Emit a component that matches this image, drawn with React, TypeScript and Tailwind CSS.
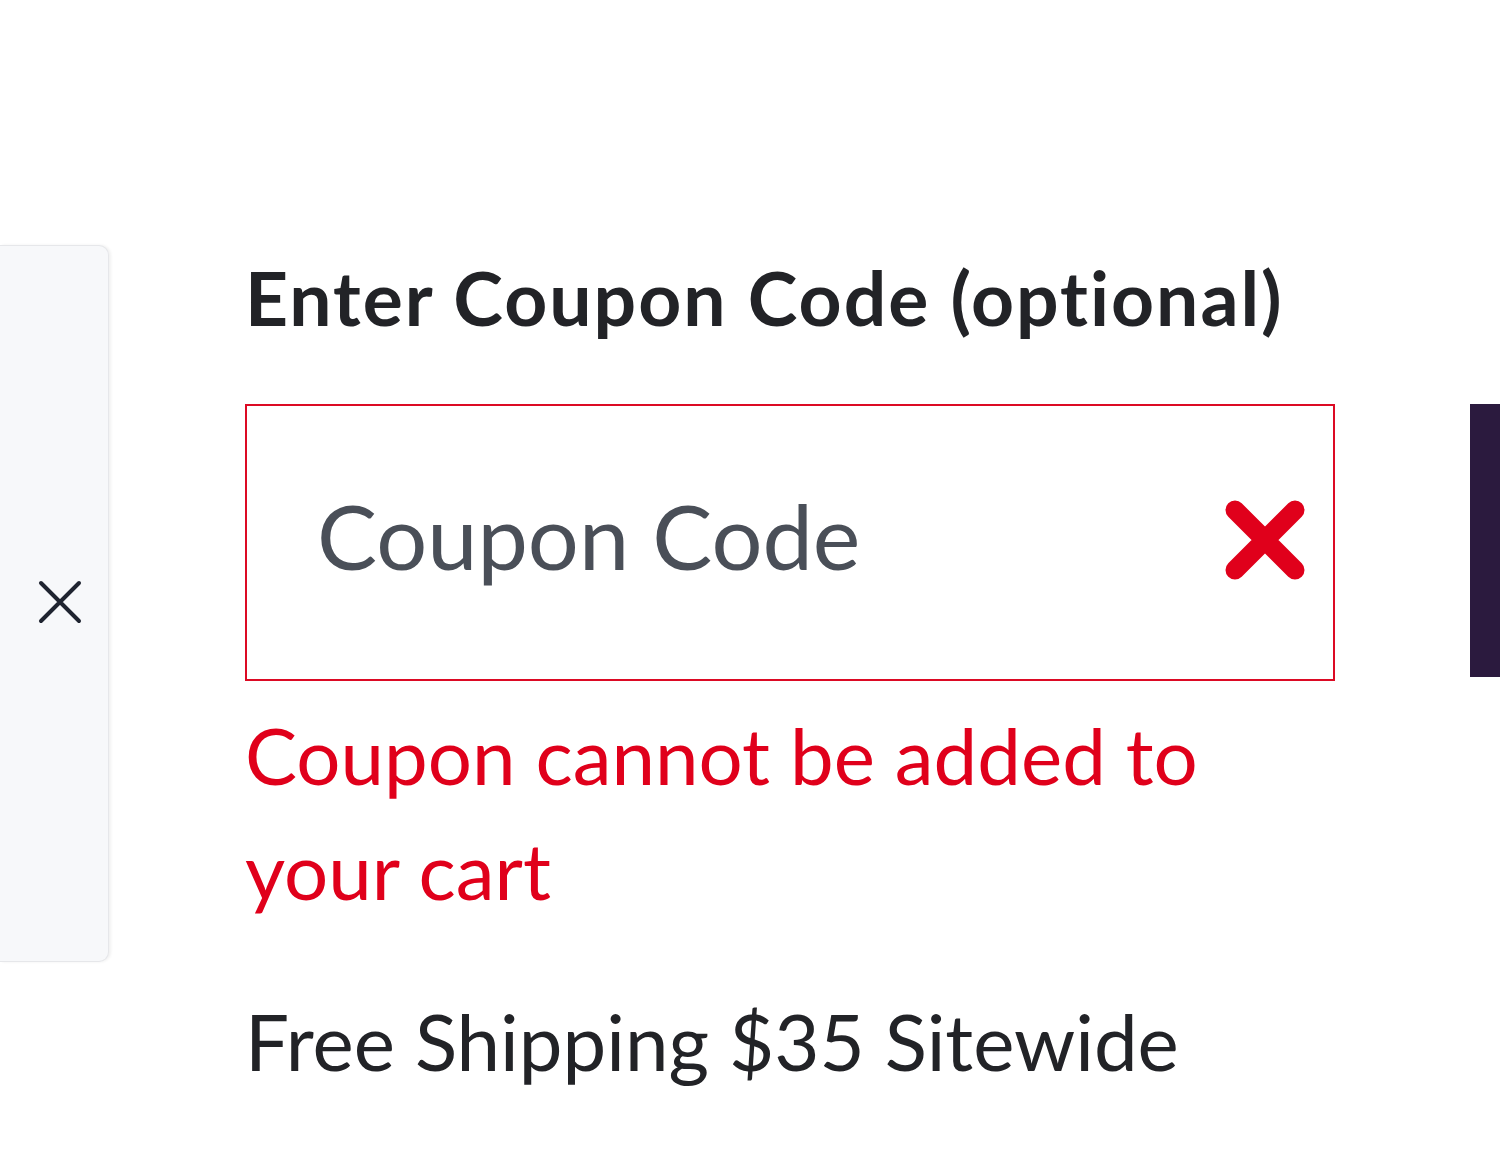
import React from "react";

export default function App() {
  return (
    <div className="relative w-[1500px] h-[1173px] overflow-hidden bg-white" style={{ fontFamily: "Lato, 'Open Sans', sans-serif" }}>
      <div className="flex items-start">
        <div className="mt-[245px] h-[717px] w-[109px] shrink-0 rounded-r-[10px] bg-[#f7f8fa] border border-l-0 border-[#e6e7ea] shadow-[2px_0_3px_rgba(0,0,0,0.06)] flex items-center justify-center pl-[12px]">
          <svg width="44" height="44" viewBox="0 0 44 44" className="mt-[-4px]">
            <path d="M3 3 L41 41 M41 3 L3 41" stroke="#1f2430" strokeWidth="4" strokeLinecap="round" />
          </svg>
        </div>
        <div className="ml-[136px] mt-[252px] w-[1090px] shrink-0 flex flex-col">
          <div className="text-[75px] leading-[90px] font-bold text-[#222327] whitespace-nowrap tracking-[2px] [font-variant-ligatures:none]">Enter Coupon Code (optional)</div>
          <div className="mt-[62px] h-[277px] border-2 border-[#dc0a24] flex items-center justify-between pl-[70px] pr-[28px]">
            <span className="text-[90px] text-[#4a4f58] leading-none mb-[16px]">Coupon Code</span>
            <svg width="80" height="80" viewBox="0 0 80 80" className="mb-[6px]">
              <path d="M10 10 L70 70 M70 10 L10 70" stroke="#e0001b" strokeWidth="19" strokeLinecap="round" />
            </svg>
          </div>
          <div className="mt-[17px] text-[78px] leading-[115px] text-[#e0001b]">Coupon cannot be added to your cart</div>
          <div className="mt-[56px] text-[78px] leading-[115px] text-[#222327] whitespace-nowrap">Free Shipping $35 Sitewide</div>
        </div>
        <div className="ml-[135px] mt-[404px] h-[273px] w-[60px] shrink-0 bg-[#2b1a3e]" />
      </div>
    </div>
  );
}
